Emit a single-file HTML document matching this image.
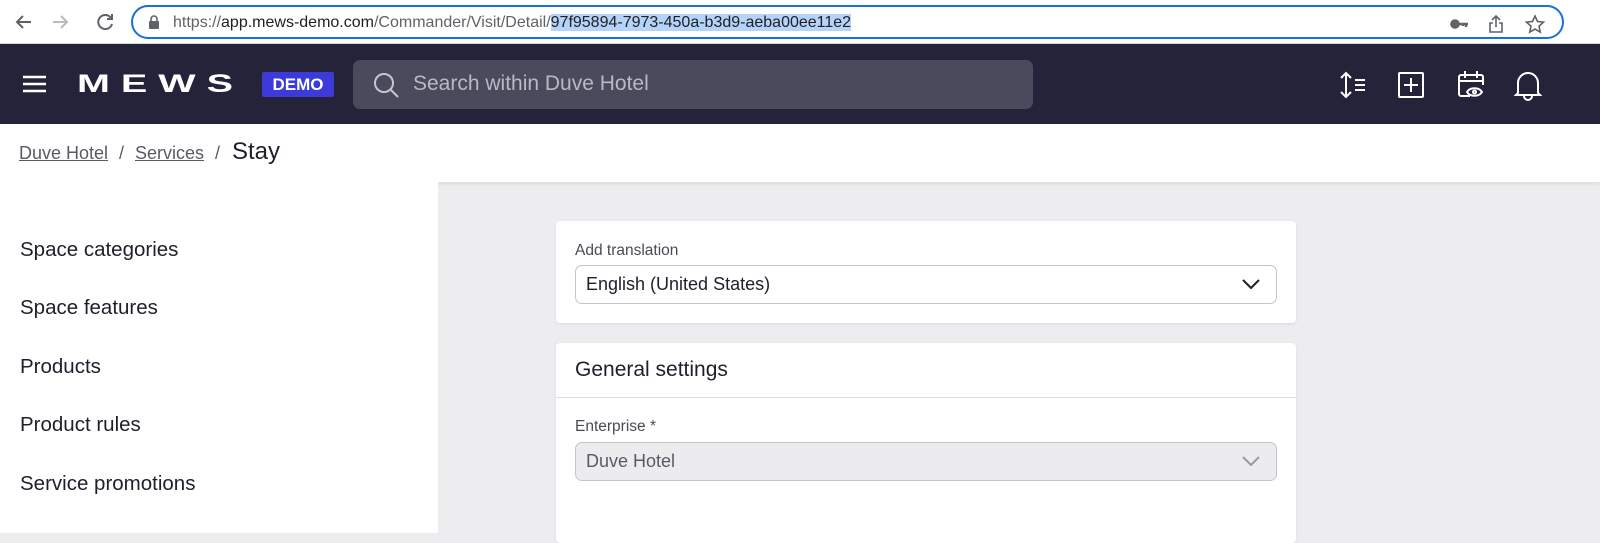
<!DOCTYPE html>
<html><head><meta charset="utf-8"><style>
*{box-sizing:border-box;margin:0;padding:0}
body{width:1600px;height:533px;overflow:hidden;font-family:"Liberation Sans",sans-serif;background:#ededef;position:relative}
.abs{position:absolute}
#chrome{left:0;top:0;width:1600px;height:44px;background:#fff;border-bottom:1px solid #dadce0}
#url{left:131px;top:5px;width:1433px;height:34px;border:2px solid #1a6fdc;border-radius:17px;background:#fff}
#url span.t{position:absolute;left:40px;top:7px;font-size:16px;color:#5f6368;white-space:nowrap}
#nav{left:0;top:44px;width:1600px;height:80px;background:#24233a}
#bc{left:0;top:124px;width:1600px;height:58px;background:#fff;box-shadow:0 2px 4px rgba(0,0,0,.08)}
#side{left:0;top:182px;width:438px;height:351px;background:#fff}
.si{position:absolute;left:20px;font-size:20.5px;color:#1f1f2b}
.card{position:absolute;left:556px;width:740px;background:#fff;border-radius:4px;box-shadow:0 1px 3px rgba(0,0,0,.08)}
.lbl{position:absolute;left:19px;font-size:15.5px;color:#4a4a55}
.sel{position:absolute;left:19px;width:702px;height:39px;border:1px solid #c4c4cc;border-radius:7px;font-size:18px;color:#1f1f2b;padding:8px 10px}
.bt{position:absolute;top:19px;font-size:18px;color:#5a5a66}
</style></head><body>
<div id="chrome" class="abs">
<svg class="abs" style="left:14px;top:12px" width="110" height="20" fill="none" stroke-width="2">
<path d="M17 10H3M9 4L3 10l6 6" stroke="#5f6368"/>
<path d="M39 10h14M47 4l6 6-6 6" stroke="#bbb"/>
<path d="M97 6a7 7 0 1 0 1 6" stroke="#5f6368"/><path d="M98 2v5h-5" stroke="#5f6368"/>
</svg>
<div id="url" class="abs">
<svg class="abs" style="left:15px;top:8px" width="12" height="14"><rect x="1" y="6" width="10" height="8" rx="1" fill="#5f6368"/><path d="M3 6V4a3 3 0 0 1 6 0v2" stroke="#5f6368" stroke-width="1.6" fill="none"/></svg>
<span class="t">https://<span style="color:#202124">app.mews-demo.com</span>/Commander/Visit/Detail/<span style="background:#b4d3f8;color:#202124">97f95894-7973-450a-b3d9-aeba00ee11e2</span></span>
<svg class="abs" style="left:1313px;top:7px" width="110" height="20" fill="none" stroke="#5f6368" stroke-width="1.6">
<circle cx="9" cy="10" r="4" fill="#5f6368"/><path d="M12 10h10M20 10v3M17 10v2" stroke-width="2.4"/>
<path d="M47 9h-3v9h12V9h-3M50 13V2M46 6l4-4 4 4"/>
<path d="M89 2l2.5 5.5 6 .6-4.5 4 1.3 6-5.3-3.1-5.3 3.1 1.3-6-4.5-4 6-.6z"/>
</svg>
</div>
</div>
<div id="nav" class="abs">
<svg class="abs" style="left:22px;top:30px" width="26" height="20" stroke="#fff" stroke-width="2.4"><path d="M1 3h23M1 10h23M1 17h23"/></svg>
<svg class="abs" style="left:77px;top:28px" width="160" height="26"><text x="0" y="22" textLength="156" lengthAdjust="spacingAndGlyphs" fill="#fff" font-family="Liberation Sans" font-weight="bold" font-size="28" transform="scale(1,0.9)">M E W S</text></svg>
<div class="abs" style="left:262px;top:28px;width:72px;height:25px;background:#3c3ad8;border-radius:2px;color:#fff;font-size:17px;font-weight:bold;text-align:center;line-height:25px">DEMO</div>
<div class="abs" style="left:353px;top:16px;width:680px;height:49px;background:#4a4a5c;border-radius:7px">
<svg class="abs" style="left:20px;top:12px" width="28" height="28" fill="none" stroke="#c6c6d0" stroke-width="2"><circle cx="11" cy="11" r="9"/><path d="M18 18l7 7"/></svg>
<span class="abs" style="left:60px;top:12px;color:#b9b9c4;font-size:21px">Search within Duve Hotel</span>
</div>
<svg class="abs" style="left:1338px;top:25px" width="220" height="32" fill="none" stroke="#fff" stroke-width="2">
<path d="M8 4v24M3 9l5-5 5 5M3 23l5 5 5-5M17 11h10M17 16h10M17 21h10"/>
<rect x="61" y="4" width="24" height="24" rx="1"/><path d="M73 9v14M66 16h14"/>
<path d="M132 27h-9a2 2 0 0 1-2-2V8a2 2 0 0 1 2-2h20a2 2 0 0 1 2 2v8M121 12h24M127 2v7M139 2v7"/>
<path d="M129 23c3-5 12-5 15 0c-3 5-12 5-15 0z"/><circle cx="136.5" cy="23" r="1.5"/>
<path d="M180 24V14a10 10 0 0 1 20 0v10l2 2h-24zM186 27a4 4 0 0 0 8 0"/>
</svg>
</div>
<div id="bc" class="abs">
<span class="bt" style="left:19px;text-decoration:underline">Duve Hotel</span>
<span class="bt" style="left:119px">/</span>
<span class="bt" style="left:135px;text-decoration:underline">Services</span>
<span class="bt" style="left:215px">/</span>
<span class="abs" style="left:232px;top:14px;font-size:24px;color:#1f1f2b">Stay</span>
</div>
<div id="side" class="abs">
<div class="si" style="top:56px">Space categories</div>
<div class="si" style="top:114px">Space features</div>
<div class="si" style="top:173px">Products</div>
<div class="si" style="top:231px">Product rules</div>
<div class="si" style="top:290px">Service promotions</div>
</div>
<div class="card" style="top:221px;height:102px">
<div class="lbl" style="top:21px">Add translation</div>
<div class="sel" style="top:44px">English (United States)
<svg class="abs" style="right:16px;top:13px" width="18" height="11" fill="none" stroke="#1f1f2b" stroke-width="2"><path d="M1 1l8 8 8-8"/></svg></div>
</div>
<div class="card" style="top:343px;height:200px">
<div class="abs" style="left:19px;top:15px;font-size:21px;color:#1f1f2b">General settings</div>
<div class="abs" style="left:0;top:54px;width:740px;height:1px;background:#dcdce0"></div>
<div class="lbl" style="top:75px">Enterprise *</div>
<div class="sel" style="top:99px;background:#ececef;color:#5a5a66">Duve Hotel
<svg class="abs" style="right:16px;top:13px" width="18" height="11" fill="none" stroke="#9a9aa4" stroke-width="2"><path d="M1 1l8 8 8-8"/></svg></div>
</div>
</body></html>
